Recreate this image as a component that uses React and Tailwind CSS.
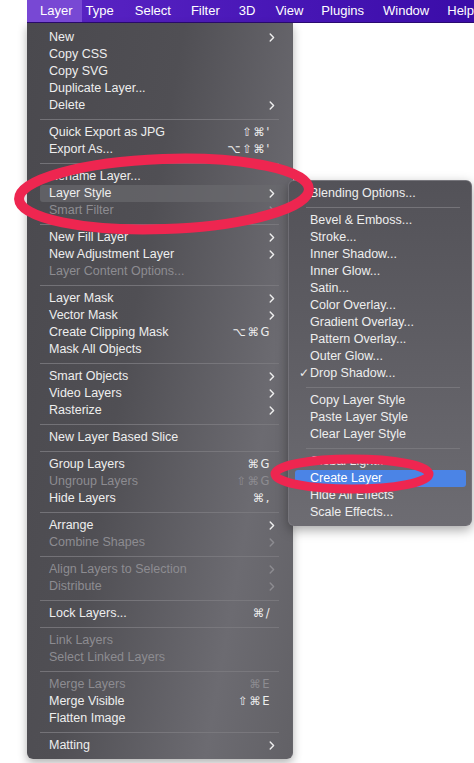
import React from 'react';

const Chevron = () => (
  <svg width="6" height="9" viewBox="0 0 6 9" className="shrink-0">
    <polyline points="1.2,1 4.6,4.5 1.2,8" fill="none" stroke="currentColor" strokeWidth="1.4" strokeLinecap="round" strokeLinejoin="round" />
  </svg>
);

const mainGroups = [
  [{ t: 'New', sub: true }, { t: 'Copy CSS' }, { t: 'Copy SVG' }, { t: 'Duplicate Layer...' }, { t: 'Delete', sub: true }],
  [{ t: 'Quick Export as JPG', k: "⇧⌘'" }, { t: 'Export As...', k: "⌥⇧⌘'" }],
  [{ t: 'Rename Layer...' }, { t: 'Layer Style', sub: true, hl: true }, { t: 'Smart Filter', sub: true, dis: true }],
  [{ t: 'New Fill Layer', sub: true }, { t: 'New Adjustment Layer', sub: true }, { t: 'Layer Content Options...', dis: true }],
  [{ t: 'Layer Mask', sub: true }, { t: 'Vector Mask', sub: true }, { t: 'Create Clipping Mask', k: '⌥⌘G' }, { t: 'Mask All Objects' }],
  [{ t: 'Smart Objects', sub: true }, { t: 'Video Layers', sub: true }, { t: 'Rasterize', sub: true }],
  [{ t: 'New Layer Based Slice' }],
  [{ t: 'Group Layers', k: '⌘G' }, { t: 'Ungroup Layers', k: '⇧⌘G', dis: true }, { t: 'Hide Layers', k: '⌘,' }],
  [{ t: 'Arrange', sub: true }, { t: 'Combine Shapes', sub: true, dis: true }],
  [{ t: 'Align Layers to Selection', sub: true, dis: true }, { t: 'Distribute', sub: true, dis: true }],
  [{ t: 'Lock Layers...', k: '⌘/' }],
  [{ t: 'Link Layers', dis: true }, { t: 'Select Linked Layers', dis: true }],
  [{ t: 'Merge Layers', k: '⌘E', dis: true }, { t: 'Merge Visible', k: '⇧⌘E' }, { t: 'Flatten Image' }],
  [{ t: 'Matting', sub: true }],
];

const subGroups = [
  [{ t: 'Blending Options...' }],
  [
    { t: 'Bevel & Emboss...' }, { t: 'Stroke...' }, { t: 'Inner Shadow...' }, { t: 'Inner Glow...' },
    { t: 'Satin...' }, { t: 'Color Overlay...' }, { t: 'Gradient Overlay...' }, { t: 'Pattern Overlay...' },
    { t: 'Outer Glow...' }, { t: 'Drop Shadow...', check: true },
  ],
  [{ t: 'Copy Layer Style' }, { t: 'Paste Layer Style' }, { t: 'Clear Layer Style' }],
  [{ t: 'Global Light...' }, { t: 'Create Layer', sel: true }, { t: 'Hide All Effects' }, { t: 'Scale Effects...' }],
];

function MainRow({ it }) {
  return (
    <div
      className={
        'ml-[13px] mr-[6px] h-[17px] pl-[9px] pr-[11px] flex items-center justify-between rounded-[3px] ' +
        (it.hl ? 'bg-[#6a696e]/70 ' : '') +
        (it.dis ? 'text-[#8d8c91]' : 'text-[#eeeeee]')
      }
    >
      <span className="leading-[17px] whitespace-nowrap">{it.t}</span>
      {it.sub && <Chevron />}
      {it.k && (
        <span className="mr-[4px] text-[11.5px] tracking-[1.5px] leading-[17px] font-['DejaVu_Sans','Liberation_Sans',sans-serif]">
          {it.k}
        </span>
      )}
    </div>
  );
}

function SubRow({ it }) {
  return (
    <div
      className={
        'ml-[6px] mr-[5px] h-[17px] pl-[15px] flex items-center relative rounded-[3px] ' +
        (it.sel ? 'bg-[#4b84e6] text-white' : 'text-[#eeeeee]')
      }
    >
      {it.check && (
        <span className="absolute left-[4px] top-0 leading-[17px] text-[12px] font-['DejaVu_Sans',sans-serif]">✓</span>
      )}
      <span className="leading-[17px] whitespace-nowrap">{it.t}</span>
    </div>
  );
}

const Sep = ({ cls }) => (
  <div className={'h-[10px] flex items-center ' + cls}>
    <div className="h-px w-full bg-[#7d7c81]/80" />
  </div>
);

export default function App() {
  return (
    <div className="relative w-[474px] h-[763px] bg-white overflow-hidden font-['Liberation_Sans','DejaVu_Sans',sans-serif] text-[12.5px]">
      {/* menu bar */}
      <div className="ml-[27px] h-[23px] flex items-stretch bg-[linear-gradient(90deg,#5d26c6_0%,#4a18b8_50%,#3a0ca8_100%)] border-b border-[#2a0a70] text-white text-[13px]">
        <div className="w-[58px] flex items-center pl-[13px] bg-[#7848d4]">Layer</div>
        <div className="flex items-center ml-[4px]">Type</div>
        <div className="flex items-center ml-[21px]">Select</div>
        <div className="flex items-center ml-[20px]">Filter</div>
        <div className="flex items-center ml-[19px]">3D</div>
        <div className="flex items-center ml-[20px]">View</div>
        <div className="flex items-center ml-[18px]">Plugins</div>
        <div className="flex items-center ml-[19px]">Window</div>
        <div className="flex items-center ml-[18px]">Help</div>
      </div>

      {/* main dropdown */}
      <div className="ml-[27px] w-[266px] pt-[6px] pb-[5px] rounded-b-[6px] bg-[linear-gradient(100deg,#4a494e_0%,#504f54_40%,#6c6b71_78%,#626166_100%)] border-r border-[#8a898e]/40 shadow-[0_4px_10px_rgba(0,0,0,0.3)]">
        {mainGroups.map((g, gi) => (
          <div key={gi}>
            {gi > 0 && <Sep cls="mx-[13px]" />}
            {g.map((it, i) => (
              <MainRow key={i} it={it} />
            ))}
          </div>
        ))}
      </div>

      {/* submenu */}
      <div className="absolute left-[288px] top-[180px] w-[184px] pt-[4px] pb-[4px] rounded-[6px] bg-[linear-gradient(180deg,#535258_0%,#5e5d63_45%,#6d6c72_100%)] border border-[#7e7d83]/60 shadow-[0_4px_12px_rgba(0,0,0,0.35)]">
        {subGroups.map((g, gi) => (
          <div key={gi}>
            {gi > 0 && <Sep cls="ml-[17px] mr-[11px]" />}
            {g.map((it, i) => (
              <SubRow key={i} it={it} />
            ))}
          </div>
        ))}
      </div>

      {/* red annotation ellipses */}
      <svg className="absolute left-0 top-0 pointer-events-none" width="474" height="763">
        <ellipse cx="164" cy="194" rx="145" ry="35" fill="none" stroke="#ee2650" strokeWidth="10" transform="rotate(-2 164 194)" />
        <ellipse cx="352" cy="474" rx="77" ry="15" fill="none" stroke="#ee2650" strokeWidth="9" />
      </svg>
    </div>
  );
}
